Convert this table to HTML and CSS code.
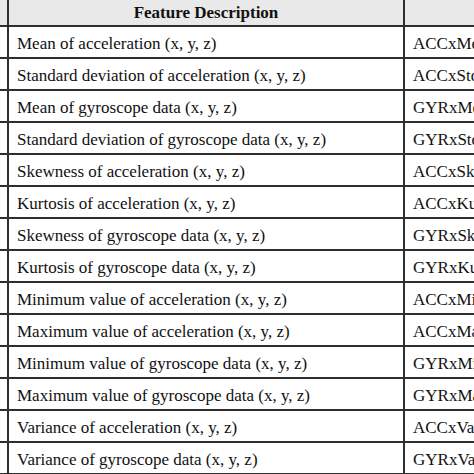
FILE: index.html
```html
<!DOCTYPE html>
<html>
<head>
<meta charset="utf-8">
<link rel="stylesheet" href="styles.css">
</head>
<body>
<table class="features">
  <colgroup>
    <col class="c-num">
    <col class="c-desc">
    <col class="c-name">
  </colgroup>
  <thead>
    <tr class="head">
      <th></th>
      <th>Feature Description</th>
      <th></th>
    </tr>
  </thead>
  <tbody>
    <tr><td></td><td>Mean of acceleration (x, y, z)</td><td>ACCxMean</td></tr>
    <tr><td></td><td>Standard deviation of acceleration (x, y, z)</td><td>ACCxStd</td></tr>
    <tr><td></td><td>Mean of gyroscope data (x, y, z)</td><td>GYRxMean</td></tr>
    <tr><td></td><td>Standard deviation of gyroscope data (x, y, z)</td><td>GYRxStd</td></tr>
    <tr><td></td><td>Skewness of acceleration (x, y, z)</td><td>ACCxSkew</td></tr>
    <tr><td></td><td>Kurtosis of acceleration (x, y, z)</td><td>ACCxKurt</td></tr>
    <tr><td></td><td>Skewness of gyroscope data (x, y, z)</td><td>GYRxSkew</td></tr>
    <tr><td></td><td>Kurtosis of gyroscope data (x, y, z)</td><td>GYRxKurt</td></tr>
    <tr><td></td><td>Minimum value of acceleration (x, y, z)</td><td>ACCxMin</td></tr>
    <tr><td></td><td>Maximum value of acceleration (x, y, z)</td><td>ACCxMax</td></tr>
    <tr><td></td><td>Minimum value of gyroscope data (x, y, z)</td><td>GYRxMin</td></tr>
    <tr><td></td><td>Maximum value of gyroscope data (x, y, z)</td><td>GYRxMax</td></tr>
    <tr><td></td><td>Variance of acceleration (x, y, z)</td><td>ACCxVar</td></tr>
    <tr><td></td><td>Variance of gyroscope data (x, y, z)</td><td>GYRxVar</td></tr>
  </tbody>
</table>
</body>
</html>
```
FILE: styles.css
```css
html, body {
  margin: 0;
  padding: 0;
  background: #ffffff;
  overflow: hidden;
  width: 474px;
  height: 474px;
}
.features {
  border-collapse: collapse;
  table-layout: fixed;
  width: 600px;
  font-family: "Liberation Serif", "Times New Roman", serif;
  font-size: 17px;
  color: #111;
}
.c-num { width: 8px; }
.c-desc { width: 396px; }
.c-name { width: 196px; }
.features th, .features td {
  border: 2px solid #2e2e2e;
  padding: 0 0 0 8px;
  white-space: nowrap;
  overflow: hidden;
  text-align: left;
}
.features th:first-child, .features td:first-child {
  border-left: none;
  padding: 0;
}
.features tr.head th {
  border-top: none;
  height: 25px;
  background: #e9e9e9;
  font-weight: bold;
  text-align: center;
  padding: 0;
}
.features tbody td {
  height: 32px;
  box-sizing: border-box;
  padding-top: 3px;
}
```
